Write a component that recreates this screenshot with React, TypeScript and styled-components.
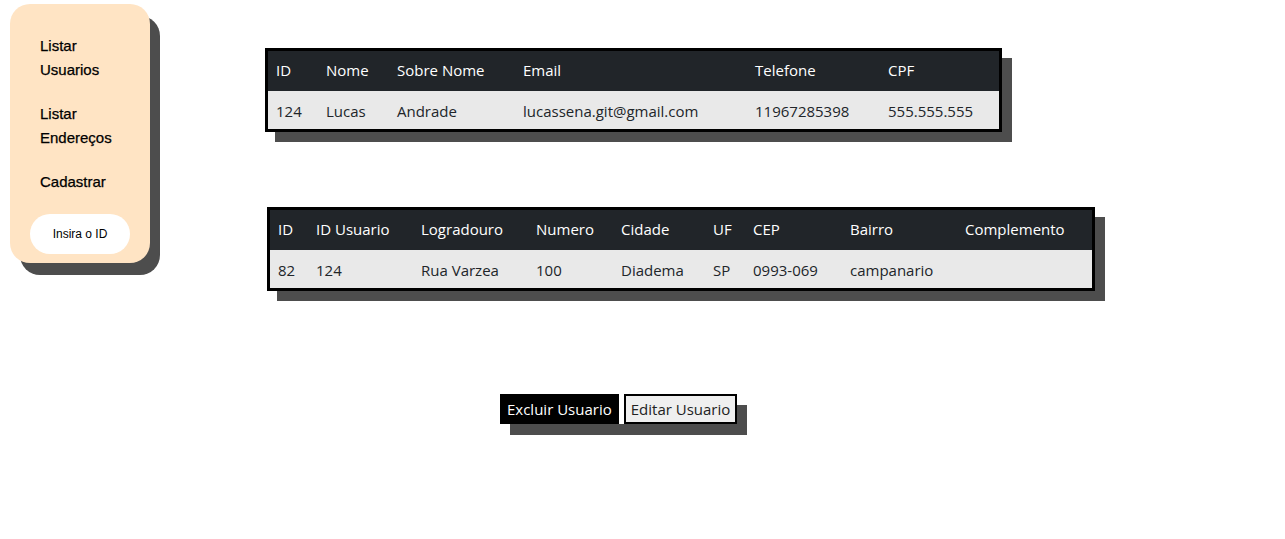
import styled, { createGlobalStyle } from 'styled-components'

const Global = createGlobalStyle`
  body {
    margin: 0;
    background: #fff;
  }
`

const Page = styled.div`
  display: flex;
  align-items: flex-start;
  width: 100vw;
  min-height: 100vh;
`

const Sidebar = styled.nav`
  flex: 0 0 auto;
  width: 140px;
  margin: 4px 0 0 10px;
  padding: 30px 20px 9px;
  box-sizing: border-box;
  background: #ffe4c4;
  border-radius: 20px;
  box-shadow: 10px 12px 0 #4d4d4d;
  display: flex;
  flex-direction: column;
  gap: 20px;
  font-family: "Liberation Sans", Arial, sans-serif;
`

const MenuItem = styled.a`
  display: block;
  width: 80px;
  padding-left: 10px;
  font-size: 15px;
  line-height: 24px;
  color: #000;
  text-decoration: none;
  -webkit-text-stroke: 0.25px #000;
  cursor: pointer;
`

const IdPill = styled.div`
  width: 100px;
  height: 40px;
  border-radius: 20px;
  background: #fff;
  display: flex;
  align-items: center;
  justify-content: center;
  font-size: 12px;
  color: #000;
`

const Main = styled.main`
  flex: 1;
  display: flex;
  flex-direction: column;
  align-items: flex-start;
  padding-top: 48px;
  font-family: "Open Sans", "Noto Sans", sans-serif;
`

const Table = styled.table<{ left: number, top?: number }>`
  margin-left: ${props => props.left}px;
  margin-top: ${props => props.top ? props.top : 0}px;
  border: 3px solid #000;
  border-spacing: 0;
  table-layout: fixed;
  box-shadow: 10px 10px 0 #4d4d4d;
  font-size: 15px;
`

const Th = styled.th`
  background: #212529;
  color: #fff;
  font-weight: 400;
  text-align: left;
  height: 40px;
  padding: 0 8px 2px;
  box-sizing: border-box;
  white-space: nowrap;
`

const Td = styled.td`
  background: #e9e9e9;
  color: #212529;
  height: 38px;
  padding: 2px 8px 0;
  box-sizing: border-box;
  white-space: nowrap;
`

const Actions = styled.div`
  display: flex;
  gap: 5px;
  margin: 103px 0 0 350px;
  background: #fff;
  box-shadow: 10px 11px 0 #4d4d4d;
`

const Button = styled.button<{ dark?: boolean }>`
  height: 30px;
  padding: 0 5px;
  border: 2px solid #000;
  background: ${props => props.dark ? '#000' : '#efefef'};
  color: ${props => props.dark ? '#fff' : '#222'};
  font-family: "Open Sans", "Noto Sans", sans-serif;
  font-size: 15px;
  cursor: pointer;
`

type Col = { label: string, width: number }

const userCols: Col[] = [
  { label: 'ID', width: 50 },
  { label: 'Nome', width: 71 },
  { label: 'Sobre Nome', width: 126 },
  { label: 'Email', width: 232 },
  { label: 'Telefone', width: 133 },
  { label: 'CPF', width: 119 },
]
const userRow = ['124', 'Lucas', 'Andrade', 'lucassena.git@gmail.com', '11967285398', '555.555.555']

const addrCols: Col[] = [
  { label: 'ID', width: 38 },
  { label: 'ID Usuario', width: 105 },
  { label: 'Logradouro', width: 115 },
  { label: 'Numero', width: 85 },
  { label: 'Cidade', width: 92 },
  { label: 'UF', width: 40 },
  { label: 'CEP', width: 97 },
  { label: 'Bairro', width: 115 },
  { label: 'Complemento', width: 135 },
]
const addrRow = ['82', '124', 'Rua Varzea', '100', 'Diadema', 'SP', '0993-069', 'campanario', '']

const DataTable = ({ cols, row, left, top }: { cols: Col[], row: string[], left: number, top?: number }) => (
  <Table left={left} top={top} style={{ width: cols.reduce((s, c) => s + c.width, 0) + 6 }}>
    <colgroup>
      {cols.map(c => <col key={c.label} style={{ width: c.width }} />)}
    </colgroup>
    <thead>
      <tr>{cols.map(c => <Th key={c.label}>{c.label}</Th>)}</tr>
    </thead>
    <tbody>
      <tr>{row.map((v, i) => <Td key={i}>{v}</Td>)}</tr>
    </tbody>
  </Table>
)

function App() {
  return (
    <>
      <Global />
      <Page>
        <Sidebar>
          <MenuItem>Listar Usuarios</MenuItem>
          <MenuItem>Listar Endereços</MenuItem>
          <MenuItem>Cadastrar</MenuItem>
          <IdPill>Insira o ID</IdPill>
        </Sidebar>
        <Main>
          <DataTable cols={userCols} row={userRow} left={115} />
          <DataTable cols={addrCols} row={addrRow} left={117} top={75} />
          <Actions>
            <Button dark>Excluir Usuario</Button>
            <Button>Editar Usuario</Button>
          </Actions>
        </Main>
      </Page>
    </>
  )
}

export default App
